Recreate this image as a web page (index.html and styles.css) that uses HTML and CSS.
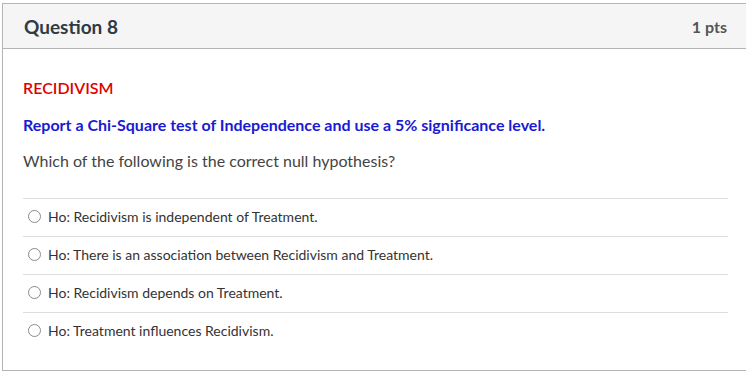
FILE: index.html
```html
<!DOCTYPE html>
<html lang="en">
<head>
    <meta charset="UTF-8">
    <title>Question 8</title>
    <link rel="stylesheet" href="styles.css">
</head>
<body>
    <div class="question">
        <div class="question-header">
            <h2 class="question-title">Question 8</h2>
            <span class="question-points">1 pts</span>
        </div>

        <div class="question-body">
            <p class="topic">RECIDIVISM</p>
            <p class="instruction">Report a Chi-Square test of Independence and use a 5% significance level.</p>
            <p class="prompt">Which of the following is the correct null hypothesis?</p>

            <div class="answers">
                <label class="answer">
                    <span class="radio"></span>
                    <span>Ho: Recidivism is independent of Treatment.</span>
                </label>
                <label class="answer">
                    <span class="radio"></span>
                    <span>Ho: There is an association between Recidivism and Treatment.</span>
                </label>
                <label class="answer">
                    <span class="radio"></span>
                    <span>Ho: Recidivism depends on Treatment.</span>
                </label>
                <label class="answer">
                    <span class="radio"></span>
                    <span>Ho: Treatment influences Recidivism.</span>
                </label>
            </div>
        </div>
    </div>
</body>
</html>
```

FILE: styles.css
```css
* {
    margin: 0;
    padding: 0;
    box-sizing: border-box;
}

body {
    font-family: Lato, 'Open Sans', sans-serif;
    background: white;
    color: #333;
}

.question {
    margin: 3px 0 0 2px;
    height: 368px;
    border: 1px solid #b4b4b4;
    border-right: none;
}

.question-header {
    height: 45px;
    background: #f5f5f5;
    border-bottom: 1px solid #b4b4b4;
    display: flex;
    align-items: center;
    justify-content: space-between;
    padding: 0 19px 0 21px;
}

.question-title {
    font-size: 19px;
    font-weight: 700;
    color: #2d3b45;
}

.question-points {
    font-size: 16px;
    font-weight: 700;
    color: #555;
}

.question-body {
    padding: 29px 18px 0 20px;
}

.topic {
    font-size: 16px;
    font-weight: 600;
    color: #e00000;
    line-height: 20px;
    margin-bottom: 16px;
}

.instruction {
    font-size: 16px;
    font-weight: 700;
    color: #1a1ad2;
    line-height: 22px;
    margin-bottom: 14px;
}

.prompt {
    font-size: 16px;
    color: #444;
    line-height: 22px;
    margin-bottom: 26px;
}

.answers {
    display: flex;
    flex-direction: column;
}

.answer {
    display: flex;
    align-items: center;
    gap: 7px;
    height: 38px;
    border-top: 1px solid #ddd;
    padding: 0 0 2px 5px;
    font-size: 14px;
    color: #333;
}

.radio {
    width: 13px;
    height: 13px;
    border: 1px solid #8a8a8a;
    border-radius: 50%;
    background: white;
}
```
